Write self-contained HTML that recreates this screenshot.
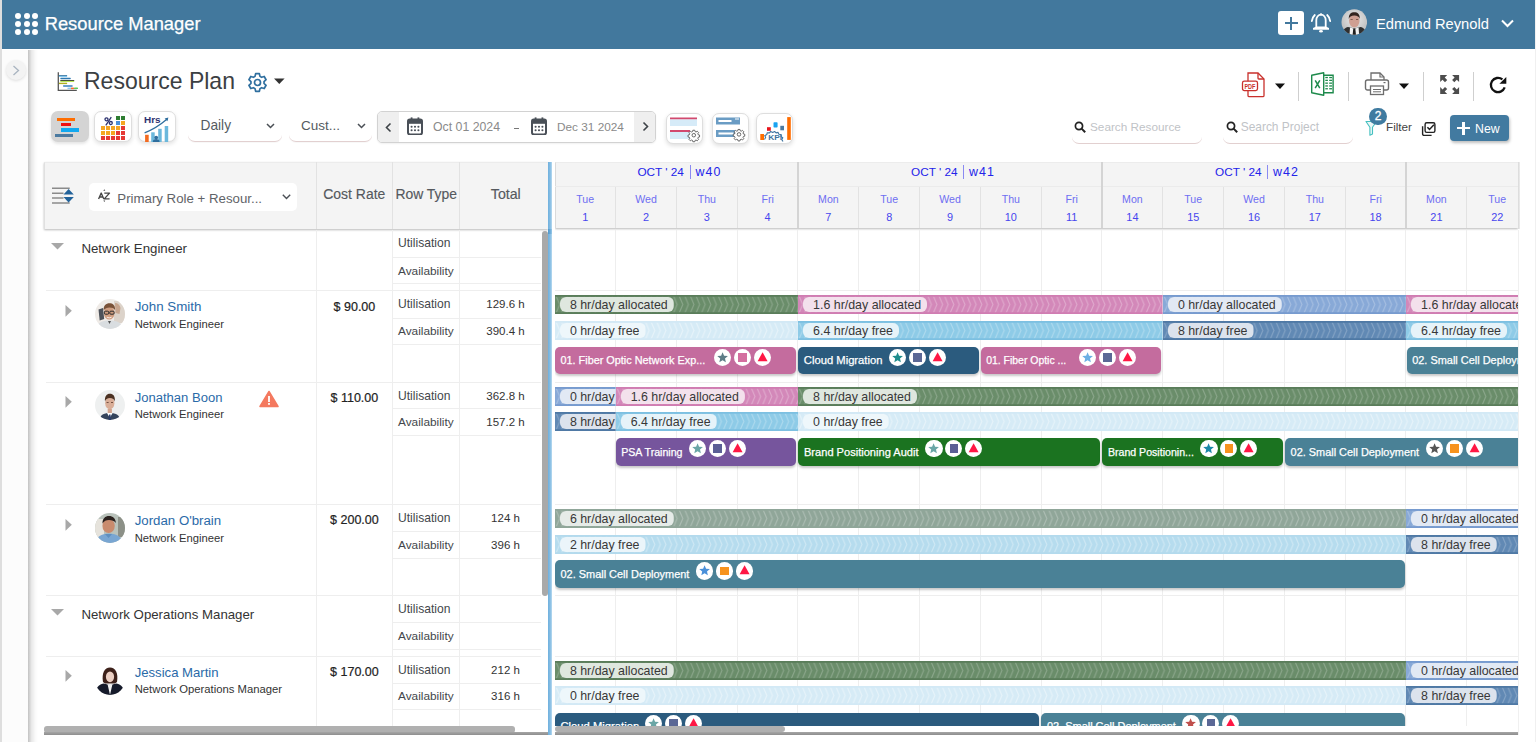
<!DOCTYPE html><html><head><meta charset="utf-8"><style>
html,body{margin:0;padding:0;}
body{width:1536px;height:742px;overflow:hidden;position:relative;background:#fff;font-family:"Liberation Sans",sans-serif;}
.a{position:absolute;}
.t{position:absolute;white-space:nowrap;}
</style></head><body>
<svg width="0" height="0" style="position:absolute"><defs>
<pattern id="chev" patternUnits="userSpaceOnUse" width="5.6" height="19"><path d="M0.8 0 L4.2 9.5 L0.8 19" fill="none" stroke="#fff" stroke-opacity="0.22" stroke-width="1.1"/></pattern>
<pattern id="chevL" patternUnits="userSpaceOnUse" width="5.6" height="19"><path d="M0.8 0 L4.2 9.5 L0.8 19" fill="none" stroke="#fff" stroke-opacity="0.35" stroke-width="1.1"/></pattern>
</defs></svg>
<svg width="0" height="0" style="position:absolute"><defs><pattern id="chvG" patternUnits="userSpaceOnUse" width="5.6" height="19"><path d="M0.6 0 L4.6 9.5 L0.6 19" fill="none" stroke="#fff" stroke-opacity="0.22" stroke-width="1.1"/></pattern><pattern id="chvP" patternUnits="userSpaceOnUse" width="5.6" height="19"><path d="M0.6 0 L4.6 9.5 L0.6 19" fill="none" stroke="#fff" stroke-opacity="0.28" stroke-width="1.1"/></pattern><pattern id="chvB" patternUnits="userSpaceOnUse" width="5.6" height="19"><path d="M0.6 0 L4.6 9.5 L0.6 19" fill="none" stroke="#fff" stroke-opacity="0.25" stroke-width="1.1"/></pattern><pattern id="chvS" patternUnits="userSpaceOnUse" width="5.6" height="19"><path d="M0.6 0 L4.6 9.5 L0.6 19" fill="none" stroke="#fff" stroke-opacity="0.25" stroke-width="1.1"/></pattern><pattern id="chvL" patternUnits="userSpaceOnUse" width="5.6" height="19"><path d="M0.6 0 L4.6 9.5 L0.6 19" fill="none" stroke="#fff" stroke-opacity="0.4" stroke-width="1.1"/></pattern><pattern id="chvM" patternUnits="userSpaceOnUse" width="5.6" height="19"><path d="M0.6 0 L4.6 9.5 L0.6 19" fill="none" stroke="#fff" stroke-opacity="0.28" stroke-width="1.1"/></pattern><pattern id="chvD" patternUnits="userSpaceOnUse" width="5.6" height="19"><path d="M0.6 0 L4.6 9.5 L0.6 19" fill="none" stroke="#fff" stroke-opacity="0.22" stroke-width="1.1"/></pattern><pattern id="chvML" patternUnits="userSpaceOnUse" width="5.6" height="19"><path d="M0.6 0 L4.6 9.5 L0.6 19" fill="none" stroke="#fff" stroke-opacity="0.35" stroke-width="1.1"/></pattern></defs></svg>
<div class="a" style="left:0.00px;top:0.00px;width:2.00px;height:742.00px;background:#dedede;"></div>
<div class="a" style="left:2.00px;top:0.00px;width:1533.00px;height:49.20px;background:#42789d;"></div>
<div class="a" style="left:1535.00px;top:0.00px;width:1.00px;height:742.00px;background:#f0f0f0;"></div>
<div class="a" style="left:15.10px;top:12.80px;width:6.00px;height:6.00px;background:#fff;border-radius:50%;"></div>
<div class="a" style="left:23.60px;top:12.80px;width:6.00px;height:6.00px;background:#fff;border-radius:50%;"></div>
<div class="a" style="left:32.00px;top:12.80px;width:6.00px;height:6.00px;background:#fff;border-radius:50%;"></div>
<div class="a" style="left:15.10px;top:21.00px;width:6.00px;height:6.00px;background:#fff;border-radius:50%;"></div>
<div class="a" style="left:23.60px;top:21.00px;width:6.00px;height:6.00px;background:#fff;border-radius:50%;"></div>
<div class="a" style="left:32.00px;top:21.00px;width:6.00px;height:6.00px;background:#fff;border-radius:50%;"></div>
<div class="a" style="left:15.10px;top:29.30px;width:6.00px;height:6.00px;background:#fff;border-radius:50%;"></div>
<div class="a" style="left:23.60px;top:29.30px;width:6.00px;height:6.00px;background:#fff;border-radius:50%;"></div>
<div class="a" style="left:32.00px;top:29.30px;width:6.00px;height:6.00px;background:#fff;border-radius:50%;"></div>
<div class="t" style="left:44.70px;top:14.91px;font-size:18.34px;line-height:18.34px;color:#fff;-webkit-text-stroke:0.25px #fff;">Resource Manager</div>
<div class="a" style="left:1278.00px;top:11.00px;width:26.00px;height:24.00px;background:#fff;border-radius:3px;"></div>
<div class="a" style="left:1284.50px;top:22.00px;width:13.00px;height:2.00px;background:#42789d;"></div>
<div class="a" style="left:1290.00px;top:16.50px;width:2.00px;height:13.00px;background:#42789d;"></div>
<svg class="a" style="left:1310.00px;top:12.00px;" width="22" height="22" viewBox="0 0 22 22"><path d="M6.3 15.6V8.2a4.7 5.6 0 0 1 9.4 0v7.4" fill="none" stroke="#fff" stroke-width="1.8"/><path d="M6.3 14.6L3 16v1.8h16V16l-3.3-1.4z" fill="#fff"/><ellipse cx="11" cy="19.3" rx="1.9" ry="1.2" fill="#fff"/><circle cx="11" cy="2.4" r="1.2" fill="#fff"/><path d="M1.8 9.2Q2.3 5.3 4.8 3M20.2 9.2Q19.7 5.3 17.2 3" fill="none" stroke="#fff" stroke-width="1.8" stroke-linecap="round"/></svg>
<svg class="a" style="left:1341.00px;top:9.00px;" width="26" height="26" viewBox="0 0 26 26"><defs><clipPath id="ca0"><circle cx="13.3" cy="13" r="12.8"/></clipPath><radialGradient id="hbg" cx="50%" cy="40%" r="60%"><stop offset="0" stop-color="#ececec"/><stop offset="1" stop-color="#b9b9b9"/></radialGradient></defs><g clip-path="url(#ca0)"><rect width="27" height="26" fill="url(#hbg)"/><ellipse cx="13.3" cy="11.8" rx="5.3" ry="6.6" fill="#cf9f92"/><path d="M7.8 10C7.6 5 10 3.3 13.3 3.3s5.7 1.7 5.5 6.7c-0.6-2.2-2.4-3.4-5.5-3.4S8.4 7.8 7.8 10z" fill="#33241f"/><rect x="9.5" y="10.2" width="2.2" height="0.8" fill="#6b4a40"/><rect x="15" y="10.2" width="2.2" height="0.8" fill="#6b4a40"/><path d="M0.5 27c0.5-5.5 3.5-8.5 6.5-9l6.3 1.5 6.3-1.5c3 0.5 6 3.5 6.5 9z" fill="#2f2f2f"/><path d="M9 18.4l4.3 1.3 4.3-1.3 0.6 8.6H8.4z" fill="#f2f2f2"/><path d="M12.3 19.5h2l0.8 7.5h-3.6z" fill="#1e1e1e"/></g></svg>
<div class="t" style="left:1376.00px;top:16.61px;font-size:14.73px;line-height:14.73px;color:#fff;">Edmund Reynold</div>
<svg class="a" style="left:1500.00px;top:18.00px;" width="15" height="11" viewBox="0 0 15 11"><path d="M2 2.5l5.5 5.5 5.5-5.5" fill="none" stroke="#fff" stroke-width="2"/></svg>
<div class="a" style="left:2.00px;top:49.50px;width:26.00px;height:692.50px;background:#fcfcfc;"></div>
<div class="a" style="left:28.00px;top:49.50px;width:10.00px;height:692.50px;background:linear-gradient(to right, rgba(0,0,0,0.24), rgba(0,0,0,0.09) 35%, rgba(0,0,0,0.02) 75%, rgba(0,0,0,0));"></div>
<div class="a" style="left:5.50px;top:60.00px;width:20.00px;height:20.00px;background:#f3f3f3;border-radius:50%;box-shadow:0 1px 3px rgba(0,0,0,0.12);"></div>
<svg class="a" style="left:11.00px;top:63.50px;" width="10" height="13" viewBox="0 0 10 13"><path d="M2.5 2l5 4.5-5 4.5" fill="none" stroke="#a9b4c0" stroke-width="1.3"/></svg>
<svg class="a" style="left:56.00px;top:71.00px;" width="24" height="22" viewBox="0 0 24 22"><path d="M2.3 1.3V19.4H20.8" fill="none" stroke="#555" stroke-width="1.3"/><rect x="2.9" y="4" width="8.2" height="0.8" fill="#2a5f8a"/><rect x="2.9" y="4.8" width="8.2" height="0.9" fill="#4ab0e8"/><rect x="4.3" y="6.8" width="10.5" height="1.4" rx="0.6" fill="#2f78b0"/><rect x="4.3" y="9" width="13.9" height="0.9" fill="#2a2a2a"/><rect x="4.3" y="9.9" width="13.9" height="0.9" fill="#a8e030"/><rect x="2.9" y="11.7" width="8.2" height="1.4" fill="#b0b020"/><rect x="7" y="14.2" width="9.7" height="1.5" rx="0.6" fill="#3a80c0"/><rect x="11.5" y="16.6" width="3.5" height="1.5" fill="#8cc8f0"/><rect x="15" y="16.6" width="3" height="1.5" fill="#ff6d2a"/><rect x="18" y="16.6" width="4" height="1.5" rx="0.6" fill="#5cc860"/></svg>
<div class="t" style="left:84.00px;top:70.32px;font-size:23.02px;line-height:23.02px;color:#3c4043;">Resource Plan</div>
<svg class="a" style="left:247.00px;top:72.20px;" width="21" height="21" viewBox="0 0 21 21"><path d="M8.03 4.38 L8.63 1.70 L12.37 1.70 L12.97 4.38 L14.56 5.30 L17.19 4.48 L19.06 7.72 L17.04 9.58 L17.04 11.42 L19.06 13.28 L17.19 16.52 L14.56 15.70 L12.97 16.62 L12.37 19.30 L8.63 19.30 L8.03 16.62 L6.44 15.70 L3.81 16.52 L1.94 13.28 L3.96 11.42 L3.96 9.58 L1.94 7.72 L3.81 4.48 L6.44 5.30Z" fill="none" stroke="#2f6f9f" stroke-width="1.7" stroke-linejoin="round"/><circle cx="10.5" cy="10.5" r="3" fill="none" stroke="#2f6f9f" stroke-width="1.7"/></svg>
<svg class="a" style="left:273.20px;top:76.80px;" width="12" height="8" viewBox="0 0 12 8"><path d="M1 1.5h10.6l-5.3 5.6z" fill="#333"/></svg>
<div class="a" style="left:51.00px;top:111.00px;width:38.00px;height:31.00px;background:#d4d4d4;border-radius:7px;box-shadow:0 2px 3px rgba(0,0,0,0.10);"></div>
<div class="a" style="left:57.00px;top:117.50px;width:18.00px;height:3.30px;background:#ff6d00;"></div>
<div class="a" style="left:60.50px;top:123.00px;width:10.50px;height:3.20px;background:#f01010;"></div>
<div class="a" style="left:60.50px;top:128.30px;width:18.50px;height:3.30px;background:#10a8f0;"></div>
<div class="a" style="left:55.00px;top:133.70px;width:17.50px;height:3.10px;background:#4b7aa0;"></div>
<div class="a" style="left:94.40px;top:111.00px;width:37.90px;height:31.00px;background:#fff;border:1px solid #dedede;box-sizing:border-box;border-radius:7px;box-shadow:0 2px 4px rgba(0,0,0,0.12);"></div>
<div class="a" style="left:138.30px;top:111.00px;width:37.90px;height:31.00px;background:#fff;border:1px solid #dedede;box-sizing:border-box;border-radius:7px;box-shadow:0 2px 4px rgba(0,0,0,0.12);"></div>
<svg class="a" style="left:100.50px;top:116.00px;" width="25" height="25" viewBox="0 0 25 25"><rect x="0" y="10" width="4" height="4" fill="#f5a623"/><rect x="5" y="10" width="4" height="4" fill="#f5a623"/><rect x="10" y="10" width="4" height="4" fill="#f5a623"/><rect x="15" y="10" width="4" height="4" fill="#f5a623"/><rect x="20" y="10" width="4" height="4" fill="#e53935"/><rect x="0" y="15" width="4" height="4" fill="#f5a623"/><rect x="5" y="15" width="4" height="4" fill="#f5a623"/><rect x="10" y="15" width="4" height="4" fill="#f5a623"/><rect x="15" y="15" width="4" height="4" fill="#e53935"/><rect x="20" y="15" width="4" height="4" fill="#e53935"/><rect x="0" y="20" width="4" height="4" fill="#e53935"/><rect x="5" y="20" width="4" height="4" fill="#e53935"/><rect x="10" y="20" width="4" height="4" fill="#e53935"/><rect x="15" y="20" width="4" height="4" fill="#e53935"/><rect x="20" y="20" width="4" height="4" fill="#e53935"/><rect x="15" y="0" width="4" height="4" fill="#2e7d32"/><rect x="20" y="0" width="4" height="4" fill="#2e7d32"/><rect x="15" y="5" width="4" height="4" fill="#4a90d9"/><rect x="20" y="5" width="4" height="4" fill="#f5a623"/><g fill="none" stroke="#2d3370" stroke-width="1.3"><circle cx="5.5" cy="3.3" r="1.5"/><circle cx="9.8" cy="7" r="1.5"/><path d="M10.3 1.2L4.8 9.4"/></g></svg>
<svg class="a" style="left:138.30px;top:111.00px;border-radius:7px;" width="37" height="31" viewBox="0 0 37 31"><text x="6" y="12.4" font-family="Liberation Sans" font-size="9.6" font-weight="bold" fill="#2d3370" textLength="16.6" lengthAdjust="spacingAndGlyphs">Hrs</text><path d="M6.6 21.8C13 19.5 21 15 29.5 7.8" fill="none" stroke="#2f6e9e" stroke-width="1.3"/><path d="M26.6 7.4l3.8-0.9-1 3.7z" fill="#2f6e9e"/><rect x="7.1" y="23.8" width="3.6" height="7.2" fill="#f26b21"/><rect x="13.2" y="21.3" width="3.5" height="9.7" fill="#6bb8dc"/><rect x="20.2" y="17.8" width="3.5" height="13.2" fill="#6bb8dc"/><rect x="26.7" y="15" width="3.5" height="16" fill="#6bb8dc"/><circle cx="18.2" cy="26.6" r="1.9" fill="#2f6e9e"/><path d="M14.8 31c0-2.2 1.5-2.9 3.4-2.9s3.4 0.7 3.4 2.9z" fill="#2f6e9e"/></svg>
<div class="a" style="left:188.00px;top:110.00px;width:94.00px;height:31.50px;border-bottom:1px solid #e2d0d0;border-radius:0 0 7px 7px;box-shadow:0 1px 1px rgba(0,0,0,0.03);box-sizing:border-box;"></div>
<div class="t" style="left:200.50px;top:119.41px;font-size:13.72px;line-height:13.72px;color:#555b61;">Daily</div>
<svg class="a" style="left:265.00px;top:122.00px;" width="11" height="8" viewBox="0 0 11 8"><path d="M2 2l3.5 3.5L9 2" fill="none" stroke="#4a4f55" stroke-width="1.5"/></svg>
<div class="a" style="left:289.00px;top:110.00px;width:83.00px;height:31.50px;border-bottom:1px solid #e2d0d0;border-radius:0 0 7px 7px;box-shadow:0 1px 1px rgba(0,0,0,0.03);box-sizing:border-box;"></div>
<div class="t" style="left:301.00px;top:119.40px;font-size:13.50px;line-height:13.50px;color:#555b61;">Cust...</div>
<svg class="a" style="left:356.00px;top:122.00px;" width="11" height="8" viewBox="0 0 11 8"><path d="M2 2l3.5 3.5L9 2" fill="none" stroke="#4a4f55" stroke-width="1.5"/></svg>
<div class="a" style="left:377.30px;top:111.30px;width:278.70px;height:31.30px;border:1px solid #d2d2d2;border-radius:5px;box-sizing:border-box;background:#fff;overflow:hidden;box-shadow:0 1px 2px rgba(0,0,0,0.06);"></div>
<div class="a" style="left:378.30px;top:112.30px;width:21.00px;height:29.30px;background:#efefef;border-radius:4px 0 0 4px;"></div>
<div class="a" style="left:634.00px;top:112.30px;width:21.00px;height:29.30px;background:#efefef;border-radius:0 4px 4px 0;"></div>
<svg class="a" style="left:384.00px;top:122.00px;" width="9" height="11" viewBox="0 0 9 11"><path d="M6.5 1.5L2.5 5.5l4 4" fill="none" stroke="#3d4247" stroke-width="1.6"/></svg>
<svg class="a" style="left:640.50px;top:121.00px;" width="9" height="11" viewBox="0 0 9 11"><path d="M2.5 1.5l4 4-4 4" fill="none" stroke="#3d4247" stroke-width="1.6"/></svg>
<svg class="a" style="left:407.00px;top:117.00px;" width="16" height="18" viewBox="0 0 16 18"><rect x="1" y="2.6" width="14" height="14.8" rx="1.8" fill="none" stroke="#4a5058" stroke-width="2"/><rect x="1" y="2.6" width="14" height="4.2" fill="#4a5058"/><rect x="3.7" y="0.4" width="1.8" height="3" fill="#4a5058"/><rect x="10.5" y="0.4" width="1.8" height="3" fill="#4a5058"/><circle cx="4.6" cy="9.8" r="1.05" fill="#4a5058"/><circle cx="8.0" cy="9.8" r="1.05" fill="#4a5058"/><circle cx="11.399999999999999" cy="9.8" r="1.05" fill="#4a5058"/><circle cx="4.6" cy="13.200000000000001" r="1.05" fill="#4a5058"/><circle cx="8.0" cy="13.200000000000001" r="1.05" fill="#4a5058"/><circle cx="11.399999999999999" cy="13.200000000000001" r="1.05" fill="#4a5058"/></svg>
<div class="t" style="left:433.00px;top:121.21px;font-size:12.30px;line-height:12.30px;color:#8a8a8a;">Oct 01 2024</div>
<div class="a" style="left:514.00px;top:127.50px;width:5.00px;height:1.30px;background:#777;"></div>
<svg class="a" style="left:531.00px;top:117.00px;" width="16" height="18" viewBox="0 0 16 18"><rect x="1" y="2.6" width="14" height="14.8" rx="1.8" fill="none" stroke="#4a5058" stroke-width="2"/><rect x="1" y="2.6" width="14" height="4.2" fill="#4a5058"/><rect x="3.7" y="0.4" width="1.8" height="3" fill="#4a5058"/><rect x="10.5" y="0.4" width="1.8" height="3" fill="#4a5058"/><circle cx="4.6" cy="9.8" r="1.05" fill="#4a5058"/><circle cx="8.0" cy="9.8" r="1.05" fill="#4a5058"/><circle cx="11.399999999999999" cy="9.8" r="1.05" fill="#4a5058"/><circle cx="4.6" cy="13.200000000000001" r="1.05" fill="#4a5058"/><circle cx="8.0" cy="13.200000000000001" r="1.05" fill="#4a5058"/><circle cx="11.399999999999999" cy="13.200000000000001" r="1.05" fill="#4a5058"/></svg>
<div class="t" style="left:557.00px;top:122.21px;font-size:11.81px;line-height:11.81px;color:#8a8a8a;">Dec 31 2024</div>
<div class="a" style="left:666.00px;top:112.70px;width:37.00px;height:31.50px;background:#fff;border:1px solid #dedede;box-sizing:border-box;border-radius:7px;box-shadow:0 2px 4px rgba(0,0,0,0.13);"></div>
<div class="a" style="left:712.00px;top:112.70px;width:36.50px;height:31.50px;background:#fff;border:1px solid #dedede;box-sizing:border-box;border-radius:7px;box-shadow:0 2px 4px rgba(0,0,0,0.13);"></div>
<div class="a" style="left:756.00px;top:112.70px;width:37.00px;height:31.50px;background:#fff;border:1px solid #dedede;box-sizing:border-box;border-radius:7px;box-shadow:0 2px 4px rgba(0,0,0,0.13);"></div>
<svg class="a" style="left:670.00px;top:116.00px;" width="32" height="30" viewBox="0 0 32 30"><rect x="0" y="1.5" width="27" height="2" fill="#d2496e"/><rect x="0" y="3.5" width="27" height="6.5" fill="#d6ebf8"/><rect x="0" y="14" width="20" height="2" fill="#d2496e"/><rect x="0" y="16" width="20" height="7" fill="#d6ebf8"/><g transform="translate(23.8 19.2) scale(0.8)"><path d="M-1.2 -6.2h2.4l0.4 1.7 1.2 0.5 1.5-1 1.7 1.7-1 1.5 0.5 1.2 1.7 0.4v2.4l-1.7 0.4-0.5 1.2 1 1.5-1.7 1.7-1.5-1-1.2 0.5-0.4 1.7h-2.4l-0.4-1.7-1.2-0.5-1.5 1-1.7-1.7 1-1.5-0.5-1.2-1.7-0.4v-2.4l1.7-0.4 0.5-1.2-1-1.5 1.7-1.7 1.5 1 1.2-0.5z" fill="#fff" stroke="#555" stroke-width="1.1" stroke-linejoin="round"/><circle r="2.2" fill="none" stroke="#555" stroke-width="1.1"/></g></svg>
<svg class="a" style="left:716.00px;top:116.00px;" width="32" height="30" viewBox="0 0 32 30"><rect x="0" y="1.5" width="24" height="7" fill="#6a9cc4"/><rect x="2.5" y="4" width="13" height="2" fill="#fff"/><rect x="19" y="2.5" width="4" height="1" fill="#fff"/><rect x="0" y="14" width="19" height="7" fill="#6a9cc4"/><rect x="2.5" y="16.5" width="15" height="2" fill="#fff"/><g transform="translate(23 18.4) scale(0.8)"><path d="M-1.2 -6.2h2.4l0.4 1.7 1.2 0.5 1.5-1 1.7 1.7-1 1.5 0.5 1.2 1.7 0.4v2.4l-1.7 0.4-0.5 1.2 1 1.5-1.7 1.7-1.5-1-1.2 0.5-0.4 1.7h-2.4l-0.4-1.7-1.2-0.5-1.5 1-1.7-1.7 1-1.5-0.5-1.2-1.7-0.4v-2.4l1.7-0.4 0.5-1.2-1-1.5 1.7-1.7 1.5 1 1.2-0.5z" fill="#fff" stroke="#555" stroke-width="1.1" stroke-linejoin="round"/><circle r="2.2" fill="none" stroke="#555" stroke-width="1.1"/></g></svg>
<svg class="a" style="left:756.00px;top:112.70px;" width="37" height="31" viewBox="0 0 37 31"><rect x="4.3" y="21" width="3.7" height="6" fill="#ff6d00"/><rect x="11" y="14.2" width="3.8" height="3.6" fill="#e8141c"/><rect x="17.5" y="9.2" width="4.1" height="5.4" rx="0.8" fill="#1aa3f0"/><rect x="24.3" y="12.8" width="3.7" height="4.5" fill="#4b7aa0"/><rect x="31.2" y="4.1" width="3.6" height="22.8" fill="#ff6d00"/><path d="M8.5 26.5l1.2-2.2-1-1.6 2.2-1.2 0.2-1.8 2.4 0.2 1.2-1.5 2 1 1.9-0.9 1.5 1.4 2-0.5 0.8 1.8 2.3 0.4-0.2 2 1.8 1.2-1 1.8 1.2 1.9" fill="none" stroke="#3f75a0" stroke-width="1.1" stroke-linejoin="round"/><text x="12.2" y="26.8" font-family="Liberation Sans" font-size="7.2" font-weight="bold" fill="#3f75a0" textLength="14" lengthAdjust="spacingAndGlyphs">KPI</text></svg>
<svg class="a" style="left:1240.50px;top:71.00px;" width="27" height="27" viewBox="0 0 27 27"><path d="M7 2h10l6 6v16.5a1.2 1.2 0 0 1-1.2 1.2H8.2A1.2 1.2 0 0 1 7 24.5z" fill="#fff" stroke="#c9302c" stroke-width="1.3"/><path d="M17 2v5.2a0.8 0.8 0 0 0 0.8 0.8H23" fill="none" stroke="#c9302c" stroke-width="1.3"/><rect x="1.5" y="10.2" width="15" height="9.4" rx="1.8" fill="#fff" stroke="#c9302c" stroke-width="1.3"/><text x="3.4" y="17.5" font-family="Liberation Sans" font-size="6.3" font-weight="bold" fill="#c9302c" textLength="11" lengthAdjust="spacingAndGlyphs">PDF</text></svg>
<svg class="a" style="left:1274.00px;top:82.00px;" width="12" height="8" viewBox="0 0 12 8"><path d="M1 1.5h10l-5 5.5z" fill="#111"/></svg>
<div class="a" style="left:1297.50px;top:72.00px;width:1.00px;height:29.40px;background:#cfcfcf;"></div>
<div class="a" style="left:1347.50px;top:72.00px;width:1.00px;height:29.40px;background:#cfcfcf;"></div>
<div class="a" style="left:1422.50px;top:72.00px;width:1.00px;height:29.40px;background:#cfcfcf;"></div>
<div class="a" style="left:1472.50px;top:72.00px;width:1.00px;height:29.40px;background:#cfcfcf;"></div>
<svg class="a" style="left:1310.00px;top:71.00px;" width="26" height="25" viewBox="0 0 26 25"><path d="M1.7 4.2l12-2.4v22.4l-12-2.5z" fill="#fff" stroke="#1e8a4c" stroke-width="1.4" stroke-linejoin="round"/><path d="M13.7 4.2h9.4v17.6h-9.4" fill="none" stroke="#1e8a4c" stroke-width="1.4"/><rect x="15.3" y="5.9" width="2.6" height="1.3" fill="#1e8a4c"/><rect x="19.2" y="5.9" width="2.8" height="1.3" fill="#1e8a4c"/><rect x="15.3" y="8.7" width="2.6" height="1.3" fill="#1e8a4c"/><rect x="19.2" y="8.7" width="2.8" height="1.3" fill="#1e8a4c"/><rect x="15.3" y="11.5" width="2.6" height="1.3" fill="#1e8a4c"/><rect x="19.2" y="11.5" width="2.8" height="1.3" fill="#1e8a4c"/><rect x="15.3" y="14.3" width="2.6" height="1.3" fill="#1e8a4c"/><rect x="19.2" y="14.3" width="2.8" height="1.3" fill="#1e8a4c"/><rect x="15.3" y="17.1" width="2.6" height="1.3" fill="#1e8a4c"/><rect x="19.2" y="17.1" width="2.8" height="1.3" fill="#1e8a4c"/><path d="M5.2 9.3l4.6 7.9M9.8 9.3l-4.6 7.9" stroke="#1e8a4c" stroke-width="1.5"/></svg>
<svg class="a" style="left:1364.00px;top:71.00px;" width="27" height="26" viewBox="0 0 27 26"><path d="M7 9V2h9l4 4v3" fill="none" stroke="#6d6d6d" stroke-width="1.3"/><path d="M16 2v4h4" fill="none" stroke="#6d6d6d" stroke-width="1.2"/><rect x="1.5" y="9" width="23" height="10" rx="2" fill="none" stroke="#6d6d6d" stroke-width="1.4"/><rect x="6.5" y="15" width="13" height="8.5" fill="#fff" stroke="#6d6d6d" stroke-width="1.3"/><path d="M9 18.5h8M9 20.8h8" stroke="#6d6d6d" stroke-width="1"/><rect x="19.5" y="11" width="2" height="1.2" fill="#6d6d6d"/></svg>
<svg class="a" style="left:1398.00px;top:82.00px;" width="12" height="8" viewBox="0 0 12 8"><path d="M1 1.5h10l-5 5.5z" fill="#111"/></svg>
<svg class="a" style="left:1439.00px;top:74.00px;" width="22" height="22" viewBox="0 0 22 22"><g fill="#4d4d4d"><path d="M1.2 1.1h7L5.7 3.6l2.5 2.5-2.2 2.2-2.5-2.5-2.3 2.3z"/><path d="M20.1 1.1h-7l2.5 2.5-2.5 2.5 2.2 2.2 2.5-2.5 2.3 2.3z"/><path d="M1.2 20.1h7l-2.5-2.5 2.5-2.5-2.2-2.2-2.5 2.5-2.3-2.3z"/><path d="M20.1 20.1h-7l2.5-2.5-2.5-2.5 2.2-2.2 2.5 2.5 2.3-2.3z"/></g></svg>
<svg class="a" style="left:1488.00px;top:74.00px;" width="21" height="21" viewBox="0 0 21 21"><path d="M14.4 5.4A7.1 7.1 0 1 0 16.7 13.4" fill="none" stroke="#111" stroke-width="2.3"/><path d="M11.4 9.7h6.9V3z" fill="#111"/></svg>
<div class="a" style="left:1072.00px;top:112.00px;width:129.60px;height:32.00px;border-bottom:1px solid #e2d0d0;border-radius:0 0 7px 7px;box-sizing:border-box;"></div>
<svg class="a" style="left:1074.00px;top:121.00px;" width="13" height="13" viewBox="0 0 13 13"><circle cx="5" cy="5" r="3.6" fill="none" stroke="#222" stroke-width="1.7"/><path d="M7.6 7.6l3.6 3.6" stroke="#222" stroke-width="2"/></svg>
<div class="t" style="left:1090.00px;top:121.41px;font-size:11.78px;line-height:11.78px;color:#bfc3c7;">Search Resource</div>
<div class="a" style="left:1223.00px;top:112.00px;width:129.60px;height:32.00px;border-bottom:1px solid #e2d0d0;border-radius:0 0 7px 7px;box-sizing:border-box;"></div>
<svg class="a" style="left:1225.60px;top:121.00px;" width="13" height="13" viewBox="0 0 13 13"><circle cx="5" cy="5" r="3.6" fill="none" stroke="#222" stroke-width="1.7"/><path d="M7.6 7.6l3.6 3.6" stroke="#222" stroke-width="2"/></svg>
<div class="t" style="left:1240.70px;top:122.41px;font-size:11.94px;line-height:11.94px;color:#bfc3c7;">Search Project</div>
<svg class="a" style="left:1365.00px;top:120.00px;" width="14" height="16" viewBox="0 0 14 16"><path d="M1 1.5h10.5l-4 5.7v6.8l-2.6 1.2V7.2z" fill="#eaf7f7" stroke="#45c0c0" stroke-width="1.1" stroke-linejoin="round"/></svg>
<div class="a" style="left:1369.20px;top:107.60px;width:17.60px;height:17.60px;background:#3f7ba0;border-radius:50%;"></div>
<div class="t" style="left:1374.66px;top:110.21px;font-size:12.00px;line-height:12.00px;color:#fff;-webkit-text-stroke:0.3px #fff;">2</div>
<div class="t" style="left:1386.00px;top:121.01px;font-size:11.70px;line-height:11.70px;color:#444;">Filter</div>
<svg class="a" style="left:1421.00px;top:121.00px;" width="16" height="16" viewBox="0 0 16 16"><path d="M1.6 5.2v7.8a1.4 1.4 0 0 0 1.4 1.4h7.6" fill="none" stroke="#222" stroke-width="1.4"/><rect x="4.1" y="1.8" width="9.8" height="9.6" rx="1.6" fill="#fff" stroke="#222" stroke-width="1.4"/><path d="M6.4 6.3l2.1 2.1 4.4-4.6" fill="none" stroke="#222" stroke-width="1.5"/></svg>
<div class="a" style="left:1450.00px;top:115.20px;width:59.00px;height:25.80px;background:#427aa0;border-radius:4px;box-shadow:1px 2px 3px rgba(0,0,0,0.25);"></div>
<div class="a" style="left:1457.00px;top:127.00px;width:13.00px;height:2.20px;background:#fff;"></div>
<div class="a" style="left:1462.40px;top:121.60px;width:2.20px;height:13.00px;background:#fff;"></div>
<div class="t" style="left:1475.00px;top:122.81px;font-size:12.30px;line-height:12.30px;color:#fff;">New</div>
<div class="a" style="left:43.50px;top:161.50px;width:504.00px;height:67.50px;background:#f4f4f4;border-left:1px solid #e0e0e0;border-top:1px solid #ececec;box-sizing:border-box;box-shadow:0 1px 2px rgba(0,0,0,0.28);"></div>
<div class="a" style="left:316.30px;top:161.50px;width:1.00px;height:67.50px;background:#e2e2e2;"></div>
<div class="a" style="left:392.00px;top:161.50px;width:1.00px;height:67.50px;background:#e2e2e2;"></div>
<div class="a" style="left:459.00px;top:161.50px;width:1.00px;height:67.50px;background:#e2e2e2;"></div>
<svg class="a" style="left:46.00px;top:180.00px;" width="30" height="26" viewBox="0 0 30 26"><g stroke="#8a8a8a" stroke-width="1.5"><path d="M6 8.2h17.7M6 13.2h11.5M6 18.1h11.5M6 23.1h17.7"/></g><path d="M17.5 14.6L22.6 8.9l5.2 5.7z" fill="#22629a"/><path d="M17.5 17.1h10.3l-5.2 5.4z" fill="#22629a"/></svg>
<div class="a" style="left:89.00px;top:183.30px;width:208.00px;height:27.80px;background:#fff;border-radius:5px;"></div>
<svg class="a" style="left:96.00px;top:186.00px;" width="16" height="18" viewBox="0 0 16 18"><g fill="none" stroke="#454545" stroke-width="1.35" stroke-linejoin="round"><path d="M2.6 13L5.2 7l2.6 6M3.6 11h3.2"/><path d="M8.3 7.1h5.2L8.3 12.9h5.3"/></g><path d="M8.3 3.2l-1 1.5h2z M7.3 14.6h2l-1 1.5z" fill="#454545"/></svg>
<div class="t" style="left:117.30px;top:191.81px;font-size:13.25px;line-height:13.25px;color:#5f6368;">Primary Role + Resour...</div>
<svg class="a" style="left:281.00px;top:193.00px;" width="11" height="8" viewBox="0 0 11 8"><path d="M1.8 1.8l3.7 3.7 3.7-3.7" fill="none" stroke="#4a4f55" stroke-width="1.4"/></svg>
<div class="t" style="left:323.30px;top:188.22px;font-size:13.94px;line-height:13.94px;color:#55595e;-webkit-text-stroke:0.15px #55595e;">Cost Rate</div>
<div class="t" style="left:395.40px;top:188.21px;font-size:13.91px;line-height:13.91px;color:#55595e;-webkit-text-stroke:0.15px #55595e;">Row Type</div>
<div class="t" style="left:490.80px;top:187.22px;font-size:14.20px;line-height:14.20px;color:#55595e;-webkit-text-stroke:0.15px #55595e;">Total</div>
<div class="a" style="left:392.50px;top:257.00px;width:148.50px;height:1.00px;background:#eeeeee;"></div>
<div class="a" style="left:392.50px;top:282.50px;width:148.50px;height:1.00px;background:#eeeeee;"></div>
<div class="a" style="left:316.30px;top:229.50px;width:1.00px;height:61.30px;background:#eeeeee;"></div>
<div class="a" style="left:392.00px;top:229.50px;width:1.00px;height:61.30px;background:#eeeeee;"></div>
<div class="a" style="left:459.00px;top:229.50px;width:1.00px;height:61.30px;background:#eeeeee;"></div>
<div class="t" style="left:398.00px;top:237.31px;font-size:12.09px;line-height:12.09px;color:#43474b;">Utilisation</div>
<div class="t" style="left:398.00px;top:265.60px;font-size:11.84px;line-height:11.84px;color:#43474b;">Availability</div>
<svg class="a" style="left:50.00px;top:242.00px;" width="15" height="8" viewBox="0 0 15 8"><path d="M1 1h13l-6.5 6.5z" fill="#a8a8a8"/></svg>
<div class="t" style="left:81.40px;top:241.81px;font-size:13.29px;line-height:13.29px;color:#333;">Network Engineer</div>
<div class="a" style="left:45.70px;top:290.30px;width:495.30px;height:1.00px;background:#eeeeee;"></div>
<div class="a" style="left:392.50px;top:317.80px;width:148.50px;height:1.00px;background:#eeeeee;"></div>
<div class="a" style="left:392.50px;top:344.10px;width:148.50px;height:1.00px;background:#eeeeee;"></div>
<div class="a" style="left:316.30px;top:290.80px;width:1.00px;height:91.80px;background:#eeeeee;"></div>
<div class="a" style="left:392.00px;top:290.80px;width:1.00px;height:91.80px;background:#eeeeee;"></div>
<div class="a" style="left:459.00px;top:290.80px;width:1.00px;height:91.80px;background:#eeeeee;"></div>
<div class="t" style="left:398.00px;top:298.22px;font-size:12.09px;line-height:12.09px;color:#43474b;">Utilisation</div>
<div class="t" style="left:398.00px;top:326.41px;font-size:11.84px;line-height:11.84px;color:#43474b;">Availability</div>
<svg class="a" style="left:64.00px;top:304.30px;" width="9" height="14" viewBox="0 0 9 14"><path d="M1.5 1v11.7l6.3-5.85z" fill="#a8a8a8"/></svg>
<svg class="a" style="left:94.50px;top:299.10px;" width="30" height="30" viewBox="0 0 30 30"><defs><clipPath id="cav0"><circle cx="15" cy="15" r="15"/></clipPath></defs><g clip-path="url(#cav0)"><rect width="30" height="30" fill="#efebe7"/><rect x="19" y="2" width="11" height="22" fill="#dcd3ca"/><path d="M20 4c3 0 5 2 5.5 5l-1 6-4-1z" fill="#c7a58e"/><path d="M3.5 10.5l4.5-1.5 1.2 11-4.5 1.5z" fill="#4d525a"/><ellipse cx="14.2" cy="14" rx="5.3" ry="6.6" fill="#cf9d80"/><path d="M8.6 11.5C8.3 6.5 11 4.3 14.5 4.3c3.2 0 5.8 1.8 5.6 6.6-1.2-1.7-3.2-2.5-5.6-2.5-2.6 0-4.5 1-5.9 3.1z" fill="#7a5238"/><rect x="9.4" y="12.2" width="4.3" height="3" rx="1" fill="none" stroke="#2a2a2a" stroke-width="1"/><rect x="14.8" y="12.2" width="4.3" height="3" rx="1" fill="none" stroke="#2a2a2a" stroke-width="1"/><path d="M11.8 18.2q2.4 1.4 4.8 0" fill="none" stroke="#fff" stroke-width="0.8"/><path d="M1 30c1-6 5.5-8.5 13.5-8.5s12.5 2.5 13.5 8.5z" fill="#d9dde0"/><path d="M13 22l1.5 3 1.5-3z" fill="#555"/></g></svg>
<div class="t" style="left:134.70px;top:300.20px;font-size:13.35px;line-height:13.35px;color:#2a6aa8;">John Smith</div>
<div class="t" style="left:134.70px;top:318.60px;font-size:11.25px;line-height:11.25px;color:#333;">Network Engineer</div>
<div class="t" style="left:333.55px;top:300.81px;font-size:12.50px;line-height:12.50px;color:#222;-webkit-text-stroke:0.2px #222;">$ 90.00</div>
<div class="t" style="left:486.32px;top:299.22px;font-size:11.50px;line-height:11.50px;color:#333;">129.6 h</div>
<div class="t" style="left:486.32px;top:326.41px;font-size:11.50px;line-height:11.50px;color:#333;">390.4 h</div>
<div class="a" style="left:45.70px;top:382.10px;width:495.30px;height:1.00px;background:#eeeeee;"></div>
<div class="a" style="left:392.50px;top:407.80px;width:148.50px;height:1.00px;background:#eeeeee;"></div>
<div class="a" style="left:392.50px;top:435.00px;width:148.50px;height:1.00px;background:#eeeeee;"></div>
<div class="a" style="left:316.30px;top:382.60px;width:1.00px;height:121.90px;background:#eeeeee;"></div>
<div class="a" style="left:392.00px;top:382.60px;width:1.00px;height:121.90px;background:#eeeeee;"></div>
<div class="a" style="left:459.00px;top:382.60px;width:1.00px;height:121.90px;background:#eeeeee;"></div>
<div class="t" style="left:398.00px;top:389.51px;font-size:12.09px;line-height:12.09px;color:#43474b;">Utilisation</div>
<div class="t" style="left:398.00px;top:416.81px;font-size:11.84px;line-height:11.84px;color:#43474b;">Availability</div>
<svg class="a" style="left:64.00px;top:394.80px;" width="9" height="14" viewBox="0 0 9 14"><path d="M1.5 1v11.7l6.3-5.85z" fill="#a8a8a8"/></svg>
<svg class="a" style="left:94.50px;top:390.30px;" width="30" height="30" viewBox="0 0 30 30"><defs><clipPath id="cav1"><circle cx="15" cy="15" r="15"/></clipPath></defs><g clip-path="url(#cav1)"><rect width="30" height="30" fill="#eef0f0"/><ellipse cx="14.8" cy="13.2" rx="4.6" ry="6.2" fill="#d9ae98"/><path d="M10 11.5c-0.6-5.2 1.8-7.8 4.9-7.8s5.6 2.4 4.9 7.8c-0.6-2.4-2.2-3.6-4.9-3.6s-4.3 1.2-4.9 3.6z" fill="#4b3122"/><rect x="11.6" y="12.2" width="2" height="0.8" fill="#5a3a2c"/><rect x="16" y="12.2" width="2" height="0.8" fill="#5a3a2c"/><path d="M4.5 30c0.5-4.5 3.5-7 10.3-7s9.8 2.5 10.3 7z" fill="#34445c"/><path d="M11.8 22.8l3 5 3-5z" fill="#fff"/><path d="M14.1 24.5h1.4l0.5 5.5h-2.4z" fill="#2c3e6a"/><path d="M12.7 19h4.2v4h-4.2z" fill="#d2a48e"/></g></svg>
<div class="t" style="left:134.70px;top:391.31px;font-size:13.06px;line-height:13.06px;color:#2a6aa8;">Jonathan Boon</div>
<div class="t" style="left:134.70px;top:409.41px;font-size:11.25px;line-height:11.25px;color:#333;">Network Engineer</div>
<div class="t" style="left:330.53px;top:391.90px;font-size:12.50px;line-height:12.50px;color:#222;-webkit-text-stroke:0.2px #222;">$ 110.00</div>
<div class="t" style="left:486.32px;top:390.51px;font-size:11.50px;line-height:11.50px;color:#333;">362.8 h</div>
<div class="t" style="left:486.32px;top:416.81px;font-size:11.50px;line-height:11.50px;color:#333;">157.2 h</div>
<svg class="a" style="left:259.00px;top:390.00px;" width="20" height="18" viewBox="0 0 20 18"><path d="M10 1.5L19 16.5H1z" fill="#f4795f" stroke="#f4795f" stroke-width="1.5" stroke-linejoin="round"/><rect x="9.1" y="6" width="1.8" height="6" fill="#fff"/><rect x="9.1" y="13" width="1.8" height="1.8" fill="#fff"/></svg>
<div class="a" style="left:45.70px;top:504.00px;width:495.30px;height:1.00px;background:#eeeeee;"></div>
<div class="a" style="left:392.50px;top:530.60px;width:148.50px;height:1.00px;background:#eeeeee;"></div>
<div class="a" style="left:392.50px;top:557.80px;width:148.50px;height:1.00px;background:#eeeeee;"></div>
<div class="a" style="left:316.30px;top:504.50px;width:1.00px;height:91.30px;background:#eeeeee;"></div>
<div class="a" style="left:392.00px;top:504.50px;width:1.00px;height:91.30px;background:#eeeeee;"></div>
<div class="a" style="left:459.00px;top:504.50px;width:1.00px;height:91.30px;background:#eeeeee;"></div>
<div class="t" style="left:398.00px;top:511.51px;font-size:12.09px;line-height:12.09px;color:#43474b;">Utilisation</div>
<div class="t" style="left:398.00px;top:539.60px;font-size:11.84px;line-height:11.84px;color:#43474b;">Availability</div>
<svg class="a" style="left:64.00px;top:518.30px;" width="9" height="14" viewBox="0 0 9 14"><path d="M1.5 1v11.7l6.3-5.85z" fill="#a8a8a8"/></svg>
<svg class="a" style="left:94.50px;top:513.00px;" width="30" height="30" viewBox="0 0 30 30"><defs><clipPath id="cav2"><circle cx="15" cy="15" r="15"/></clipPath></defs><g clip-path="url(#cav2)"><rect width="30" height="30" fill="#b9c2bb"/><rect x="0" y="6" width="9" height="18" fill="#e6e3dc"/><rect x="23" y="4" width="7" height="20" fill="#8c9087"/><ellipse cx="13.6" cy="12.8" rx="6.2" ry="7.2" fill="#c98b6e"/><path d="M7.5 10.5c-0.2-5 2.8-7.6 6.5-7.6s6.8 2.2 6.8 7c-1.5-2.2-4-3-6.8-3S9 7.8 7.5 10.5z" fill="#2a211e"/><path d="M0.5 30c1-6 5.5-9.5 13.5-9.5s12.5 3.5 13.5 9.5z" fill="#79a6d2"/><path d="M10 21l3.5 4 3.5-4z" fill="#5f8fbf"/></g></svg>
<div class="t" style="left:134.70px;top:513.81px;font-size:13.25px;line-height:13.25px;color:#2a6aa8;">Jordan O'brain</div>
<div class="t" style="left:134.70px;top:532.60px;font-size:11.25px;line-height:11.25px;color:#333;">Network Engineer</div>
<div class="t" style="left:330.07px;top:514.21px;font-size:12.50px;line-height:12.50px;color:#222;-webkit-text-stroke:0.2px #222;">$ 200.00</div>
<div class="t" style="left:491.11px;top:512.51px;font-size:11.50px;line-height:11.50px;color:#333;">124 h</div>
<div class="t" style="left:491.11px;top:539.60px;font-size:11.50px;line-height:11.50px;color:#333;">396 h</div>
<div class="a" style="left:45.70px;top:595.30px;width:495.30px;height:1.00px;background:#eeeeee;"></div>
<div class="a" style="left:392.50px;top:622.40px;width:148.50px;height:1.00px;background:#eeeeee;"></div>
<div class="a" style="left:392.50px;top:649.10px;width:148.50px;height:1.00px;background:#eeeeee;"></div>
<div class="a" style="left:316.30px;top:595.80px;width:1.00px;height:60.40px;background:#eeeeee;"></div>
<div class="a" style="left:392.00px;top:595.80px;width:1.00px;height:60.40px;background:#eeeeee;"></div>
<div class="a" style="left:459.00px;top:595.80px;width:1.00px;height:60.40px;background:#eeeeee;"></div>
<div class="t" style="left:398.00px;top:603.01px;font-size:12.09px;line-height:12.09px;color:#43474b;">Utilisation</div>
<div class="t" style="left:398.00px;top:630.50px;font-size:11.84px;line-height:11.84px;color:#43474b;">Availability</div>
<svg class="a" style="left:50.00px;top:607.80px;" width="15" height="8" viewBox="0 0 15 8"><path d="M1 1h13l-6.5 6.5z" fill="#a8a8a8"/></svg>
<div class="t" style="left:81.40px;top:607.72px;font-size:13.24px;line-height:13.24px;color:#333;">Network Operations Manager</div>
<div class="a" style="left:45.70px;top:655.70px;width:495.30px;height:1.00px;background:#eeeeee;"></div>
<div class="a" style="left:392.50px;top:683.10px;width:148.50px;height:1.00px;background:#eeeeee;"></div>
<div class="a" style="left:392.50px;top:709.30px;width:148.50px;height:1.00px;background:#eeeeee;"></div>
<div class="a" style="left:316.30px;top:656.20px;width:1.00px;height:69.80px;background:#eeeeee;"></div>
<div class="a" style="left:392.00px;top:656.20px;width:1.00px;height:69.80px;background:#eeeeee;"></div>
<div class="a" style="left:459.00px;top:656.20px;width:1.00px;height:69.80px;background:#eeeeee;"></div>
<div class="t" style="left:398.00px;top:663.51px;font-size:12.09px;line-height:12.09px;color:#43474b;">Utilisation</div>
<div class="t" style="left:398.00px;top:691.21px;font-size:11.84px;line-height:11.84px;color:#43474b;">Availability</div>
<svg class="a" style="left:64.00px;top:669.30px;" width="9" height="14" viewBox="0 0 9 14"><path d="M1.5 1v11.7l6.3-5.85z" fill="#a8a8a8"/></svg>
<svg class="a" style="left:94.50px;top:664.70px;" width="30" height="30" viewBox="0 0 30 30"><defs><clipPath id="cav3"><circle cx="15" cy="15" r="15"/></clipPath></defs><g clip-path="url(#cav3)"><rect width="30" height="30" fill="#fff"/><path d="M8 17c-1.5-9 1.5-14.5 7-14.5s8.5 5.5 7 14.5l-2 1.5h-10z" fill="#3d211a"/><ellipse cx="15" cy="11.8" rx="4.1" ry="5.4" fill="#ecd0c4"/><path d="M0.5 30c0-7 3-10.5 8-11.5l6.5 1.5 6.5-1.5c5 1 8 4.5 8 11.5z" fill="#161b2b"/><path d="M12.5 19l2.5 11 2.5-11-2.5 0.8z" fill="#f2f2f2"/></g></svg>
<div class="t" style="left:134.70px;top:665.71px;font-size:13.14px;line-height:13.14px;color:#2a6aa8;">Jessica Martin</div>
<div class="t" style="left:134.70px;top:683.70px;font-size:11.29px;line-height:11.29px;color:#333;">Network Operations Manager</div>
<div class="t" style="left:330.07px;top:666.40px;font-size:12.50px;line-height:12.50px;color:#222;-webkit-text-stroke:0.2px #222;">$ 170.00</div>
<div class="t" style="left:491.11px;top:664.51px;font-size:11.50px;line-height:11.50px;color:#333;">212 h</div>
<div class="t" style="left:491.11px;top:691.22px;font-size:11.50px;line-height:11.50px;color:#333;">316 h</div>
<div class="a" style="left:541.50px;top:231.00px;width:6.00px;height:365.30px;background:#a9a9a9;border-radius:3px;"></div>
<div class="a" style="left:547.50px;top:161.50px;width:4.50px;height:573.20px;background:linear-gradient(to right,#6fb0de,#86bde3 55%,#b8daf0);"></div>
<div class="a" style="left:547.50px;top:229.00px;width:4.50px;height:5.00px;background:linear-gradient(to right,#4f98cc,#6aaad8 55%,#9ccbe9);"></div>
<div class="a" style="left:43.50px;top:726.00px;width:504.00px;height:9.00px;background:#fff;"></div>
<div class="a" style="left:43.80px;top:726.00px;width:470.80px;height:6.50px;background:#b0b0b0;border-radius:3px;"></div>
<div class="a" style="left:43.80px;top:732.00px;width:504.20px;height:3.00px;background:linear-gradient(#a6a6a6,#8e8e8e);"></div>
<div class="a" style="left:554.8px;top:161.5px;width:963.60px;height:574px;overflow:hidden;">
<div class="a" style="left:0.00px;top:0.00px;width:963.60px;height:66.80px;background:#f4f4f4;border-top:1px solid #ececec;border-left:1px solid #dadada;box-sizing:border-box;box-shadow:0 1px 2px rgba(0,0,0,0.28);"></div>
<div class="a" style="left:0.00px;top:24.80px;width:963.60px;height:1.00px;background:#ebebeb;"></div>
<div class="a" style="left:60.30px;top:25.50px;width:1.00px;height:41.30px;background:#e2e2e2;"></div>
<div class="a" style="left:121.10px;top:25.50px;width:1.00px;height:41.30px;background:#e2e2e2;"></div>
<div class="a" style="left:181.90px;top:25.50px;width:1.00px;height:41.30px;background:#e2e2e2;"></div>
<div class="a" style="left:242.20px;top:0.00px;width:2.00px;height:66.80px;background:#d4d4d4;"></div>
<div class="a" style="left:303.50px;top:25.50px;width:1.00px;height:41.30px;background:#e2e2e2;"></div>
<div class="a" style="left:364.30px;top:25.50px;width:1.00px;height:41.30px;background:#e2e2e2;"></div>
<div class="a" style="left:425.10px;top:25.50px;width:1.00px;height:41.30px;background:#e2e2e2;"></div>
<div class="a" style="left:485.90px;top:25.50px;width:1.00px;height:41.30px;background:#e2e2e2;"></div>
<div class="a" style="left:546.20px;top:0.00px;width:2.00px;height:66.80px;background:#d4d4d4;"></div>
<div class="a" style="left:607.50px;top:25.50px;width:1.00px;height:41.30px;background:#e2e2e2;"></div>
<div class="a" style="left:668.30px;top:25.50px;width:1.00px;height:41.30px;background:#e2e2e2;"></div>
<div class="a" style="left:729.10px;top:25.50px;width:1.00px;height:41.30px;background:#e2e2e2;"></div>
<div class="a" style="left:789.90px;top:25.50px;width:1.00px;height:41.30px;background:#e2e2e2;"></div>
<div class="a" style="left:850.20px;top:0.00px;width:2.00px;height:66.80px;background:#d4d4d4;"></div>
<div class="a" style="left:911.50px;top:25.50px;width:1.00px;height:41.30px;background:#e2e2e2;"></div>
<div class="t" style="left:21.46px;top:32.91px;font-size:10.60px;line-height:10.60px;color:#6e6ef2;">Tue</div>
<div class="t" style="left:27.37px;top:50.50px;font-size:10.90px;line-height:10.90px;color:#4646ee;">1</div>
<div class="t" style="left:80.40px;top:32.91px;font-size:10.60px;line-height:10.60px;color:#6e6ef2;">Wed</div>
<div class="t" style="left:88.17px;top:50.50px;font-size:10.90px;line-height:10.90px;color:#4646ee;">2</div>
<div class="t" style="left:142.87px;top:32.91px;font-size:10.60px;line-height:10.60px;color:#6e6ef2;">Thu</div>
<div class="t" style="left:148.97px;top:50.50px;font-size:10.90px;line-height:10.90px;color:#4646ee;">3</div>
<div class="t" style="left:206.62px;top:32.91px;font-size:10.60px;line-height:10.60px;color:#6e6ef2;">Fri</div>
<div class="t" style="left:209.77px;top:50.50px;font-size:10.90px;line-height:10.90px;color:#4646ee;">4</div>
<div class="t" style="left:263.29px;top:32.91px;font-size:10.60px;line-height:10.60px;color:#6e6ef2;">Mon</div>
<div class="t" style="left:270.57px;top:50.50px;font-size:10.90px;line-height:10.90px;color:#4646ee;">7</div>
<div class="t" style="left:325.46px;top:32.91px;font-size:10.60px;line-height:10.60px;color:#6e6ef2;">Tue</div>
<div class="t" style="left:331.37px;top:50.50px;font-size:10.90px;line-height:10.90px;color:#4646ee;">8</div>
<div class="t" style="left:384.40px;top:32.91px;font-size:10.60px;line-height:10.60px;color:#6e6ef2;">Wed</div>
<div class="t" style="left:392.17px;top:50.50px;font-size:10.90px;line-height:10.90px;color:#4646ee;">9</div>
<div class="t" style="left:446.87px;top:32.91px;font-size:10.60px;line-height:10.60px;color:#6e6ef2;">Thu</div>
<div class="t" style="left:449.94px;top:50.50px;font-size:10.90px;line-height:10.90px;color:#4646ee;">10</div>
<div class="t" style="left:510.62px;top:32.91px;font-size:10.60px;line-height:10.60px;color:#6e6ef2;">Fri</div>
<div class="t" style="left:511.14px;top:50.50px;font-size:10.90px;line-height:10.90px;color:#4646ee;">11</div>
<div class="t" style="left:567.29px;top:32.91px;font-size:10.60px;line-height:10.60px;color:#6e6ef2;">Mon</div>
<div class="t" style="left:571.54px;top:50.50px;font-size:10.90px;line-height:10.90px;color:#4646ee;">14</div>
<div class="t" style="left:629.46px;top:32.91px;font-size:10.60px;line-height:10.60px;color:#6e6ef2;">Tue</div>
<div class="t" style="left:632.34px;top:50.50px;font-size:10.90px;line-height:10.90px;color:#4646ee;">15</div>
<div class="t" style="left:688.40px;top:32.91px;font-size:10.60px;line-height:10.60px;color:#6e6ef2;">Wed</div>
<div class="t" style="left:693.14px;top:50.50px;font-size:10.90px;line-height:10.90px;color:#4646ee;">16</div>
<div class="t" style="left:750.87px;top:32.91px;font-size:10.60px;line-height:10.60px;color:#6e6ef2;">Thu</div>
<div class="t" style="left:753.94px;top:50.50px;font-size:10.90px;line-height:10.90px;color:#4646ee;">17</div>
<div class="t" style="left:814.62px;top:32.91px;font-size:10.60px;line-height:10.60px;color:#6e6ef2;">Fri</div>
<div class="t" style="left:814.74px;top:50.50px;font-size:10.90px;line-height:10.90px;color:#4646ee;">18</div>
<div class="t" style="left:871.29px;top:32.91px;font-size:10.60px;line-height:10.60px;color:#6e6ef2;">Mon</div>
<div class="t" style="left:875.54px;top:50.50px;font-size:10.90px;line-height:10.90px;color:#4646ee;">21</div>
<div class="t" style="left:933.46px;top:32.91px;font-size:10.60px;line-height:10.60px;color:#6e6ef2;">Tue</div>
<div class="t" style="left:936.34px;top:50.50px;font-size:10.90px;line-height:10.90px;color:#4646ee;">22</div>
<div class="t" style="left:82.60px;top:4.50px;font-size:11.77px;line-height:11.77px;color:#2323ea;">OCT ' 24</div>
<div class="a" style="left:134.80px;top:3.50px;width:1.00px;height:14.00px;background:#8a8af2;"></div>
<div class="t" style="left:140.60px;top:4.51px;font-size:12.40px;line-height:12.40px;color:#2323ea;letter-spacing:1.1px;">w40</div>
<div class="t" style="left:356.20px;top:4.50px;font-size:11.77px;line-height:11.77px;color:#2323ea;">OCT ' 24</div>
<div class="a" style="left:408.40px;top:3.50px;width:1.00px;height:14.00px;background:#8a8af2;"></div>
<div class="t" style="left:414.20px;top:4.51px;font-size:12.40px;line-height:12.40px;color:#2323ea;letter-spacing:1.1px;">w41</div>
<div class="t" style="left:660.20px;top:4.50px;font-size:11.77px;line-height:11.77px;color:#2323ea;">OCT ' 24</div>
<div class="a" style="left:712.40px;top:3.50px;width:1.00px;height:14.00px;background:#8a8af2;"></div>
<div class="t" style="left:718.20px;top:4.51px;font-size:12.40px;line-height:12.40px;color:#2323ea;letter-spacing:1.1px;">w42</div>
<div class="a" style="left:60.30px;top:68.00px;width:1.00px;height:496.50px;background:#eeeeee;"></div>
<div class="a" style="left:121.10px;top:68.00px;width:1.00px;height:496.50px;background:#eeeeee;"></div>
<div class="a" style="left:181.90px;top:68.00px;width:1.00px;height:496.50px;background:#eeeeee;"></div>
<div class="a" style="left:242.70px;top:68.00px;width:1.00px;height:496.50px;background:#eeeeee;"></div>
<div class="a" style="left:303.50px;top:68.00px;width:1.00px;height:496.50px;background:#eeeeee;"></div>
<div class="a" style="left:364.30px;top:68.00px;width:1.00px;height:496.50px;background:#eeeeee;"></div>
<div class="a" style="left:425.10px;top:68.00px;width:1.00px;height:496.50px;background:#eeeeee;"></div>
<div class="a" style="left:485.90px;top:68.00px;width:1.00px;height:496.50px;background:#eeeeee;"></div>
<div class="a" style="left:546.70px;top:68.00px;width:1.00px;height:496.50px;background:#eeeeee;"></div>
<div class="a" style="left:607.50px;top:68.00px;width:1.00px;height:496.50px;background:#eeeeee;"></div>
<div class="a" style="left:668.30px;top:68.00px;width:1.00px;height:496.50px;background:#eeeeee;"></div>
<div class="a" style="left:729.10px;top:68.00px;width:1.00px;height:496.50px;background:#eeeeee;"></div>
<div class="a" style="left:789.90px;top:68.00px;width:1.00px;height:496.50px;background:#eeeeee;"></div>
<div class="a" style="left:850.70px;top:68.00px;width:1.00px;height:496.50px;background:#eeeeee;"></div>
<div class="a" style="left:911.50px;top:68.00px;width:1.00px;height:496.50px;background:#eeeeee;"></div>
<div class="a" style="left:0.00px;top:128.80px;width:963.60px;height:1.00px;background:#eeeeee;"></div>
<div class="a" style="left:0.00px;top:220.60px;width:963.60px;height:1.00px;background:#eeeeee;"></div>
<div class="a" style="left:0.00px;top:342.60px;width:963.60px;height:1.00px;background:#eeeeee;"></div>
<div class="a" style="left:0.00px;top:433.70px;width:963.60px;height:1.00px;background:#eeeeee;"></div>
<div class="a" style="left:0.00px;top:494.40px;width:963.60px;height:1.00px;background:#eeeeee;"></div>
<svg class="a" style="left:0.30px;top:133.60px;" width="242.9" height="19" viewBox="0 0 242.9 19"><rect x="0" y="0" width="242.90" height="19" fill="#6a8d6a"/><rect x="0" y="0" width="242.90" height="19" fill="url(#chvG)"/><rect x="0" y="0" width="242.90" height="1.8" fill="#5a7d5a"/><rect x="0" y="17.2" width="242.90" height="1.8" fill="#5a7d5a"/></svg>
<div class="a" style="left:5.10px;top:135.60px;width:113.89px;height:15.00px;background:#dfe7df;border-radius:6px;clip-path:inset(-1px 0.00px -1px -1px);"></div>
<div class="t" style="left:15.10px;top:137.60px;font-size:12.40px;line-height:12.40px;color:#383838;clip-path:inset(-3px 0.00px -3px 0);">8 hr/day allocated</div>
<svg class="a" style="left:243.50px;top:133.60px;" width="364.5" height="19" viewBox="0 0 364.5 19"><rect x="0" y="0" width="364.50" height="19" fill="#d388b9"/><rect x="0" y="0" width="364.50" height="19" fill="url(#chvP)"/><rect x="0" y="0" width="364.50" height="1.8" fill="#d07db2"/><rect x="0" y="17.2" width="364.50" height="1.8" fill="#d07db2"/></svg>
<div class="a" style="left:248.30px;top:135.60px;width:124.23px;height:15.00px;background:#f3e1ec;border-radius:6px;clip-path:inset(-1px 0.00px -1px -1px);"></div>
<div class="t" style="left:258.30px;top:137.60px;font-size:12.40px;line-height:12.40px;color:#383838;clip-path:inset(-3px 0.00px -3px 0);">1.6 hr/day allocated</div>
<svg class="a" style="left:608.30px;top:133.60px;" width="242.9" height="19" viewBox="0 0 242.9 19"><rect x="0" y="0" width="242.90" height="19" fill="#88a9d7"/><rect x="0" y="0" width="242.90" height="19" fill="url(#chvB)"/><rect x="0" y="0" width="242.90" height="1.8" fill="#779bcf"/><rect x="0" y="17.2" width="242.90" height="1.8" fill="#779bcf"/></svg>
<div class="a" style="left:613.10px;top:135.60px;width:113.89px;height:15.00px;background:#e2e9f4;border-radius:6px;clip-path:inset(-1px 0.00px -1px -1px);"></div>
<div class="t" style="left:623.10px;top:137.60px;font-size:12.40px;line-height:12.40px;color:#383838;clip-path:inset(-3px 0.00px -3px 0);">0 hr/day allocated</div>
<svg class="a" style="left:851.50px;top:133.60px;" width="117.1" height="19" viewBox="0 0 117.1 19"><rect x="0" y="0" width="117.10" height="19" fill="#d388b9"/><rect x="0" y="0" width="117.10" height="19" fill="url(#chvP)"/><rect x="0" y="0" width="117.10" height="1.8" fill="#d07db2"/><rect x="0" y="17.2" width="117.10" height="1.8" fill="#d07db2"/></svg>
<div class="a" style="left:856.30px;top:135.60px;width:124.23px;height:15.00px;background:#f3e1ec;border-radius:6px;clip-path:inset(-1px 11.93px -1px -1px);"></div>
<div class="t" style="left:866.30px;top:137.60px;font-size:12.40px;line-height:12.40px;color:#383838;clip-path:inset(-3px 5.93px -3px 0);">1.6 hr/day allocated</div>
<svg class="a" style="left:0.30px;top:159.50px;" width="242.9" height="19" viewBox="0 0 242.9 19"><rect x="0" y="0" width="242.90" height="19" fill="#d6ebf6"/><rect x="0" y="0" width="242.90" height="19" fill="url(#chvL)"/><rect x="0" y="0" width="242.90" height="1.8" fill="#d3e9f5"/><rect x="0" y="17.2" width="242.90" height="1.8" fill="#d3e9f5"/></svg>
<div class="a" style="left:5.10px;top:161.50px;width:85.62px;height:15.00px;background:#eef7fb;border-radius:6px;clip-path:inset(-1px 0.00px -1px -1px);"></div>
<div class="t" style="left:15.10px;top:163.51px;font-size:12.40px;line-height:12.40px;color:#383838;clip-path:inset(-3px 0.00px -3px 0);">0 hr/day free</div>
<svg class="a" style="left:243.50px;top:159.50px;" width="364.5" height="19" viewBox="0 0 364.5 19"><rect x="0" y="0" width="364.50" height="19" fill="#8ecbe7"/><rect x="0" y="0" width="364.50" height="19" fill="url(#chvM)"/><rect x="0" y="0" width="364.50" height="1.8" fill="#7dc0e1"/><rect x="0" y="17.2" width="364.50" height="1.8" fill="#7dc0e1"/></svg>
<div class="a" style="left:248.30px;top:161.50px;width:95.96px;height:15.00px;background:#e6f3f9;border-radius:6px;clip-path:inset(-1px 0.00px -1px -1px);"></div>
<div class="t" style="left:258.30px;top:163.51px;font-size:12.40px;line-height:12.40px;color:#383838;clip-path:inset(-3px 0.00px -3px 0);">6.4 hr/day free</div>
<svg class="a" style="left:608.30px;top:159.50px;" width="242.9" height="19" viewBox="0 0 242.9 19"><rect x="0" y="0" width="242.90" height="19" fill="#6189b4"/><rect x="0" y="0" width="242.90" height="19" fill="url(#chvD)"/><rect x="0" y="0" width="242.90" height="1.8" fill="#4f79a5"/><rect x="0" y="17.2" width="242.90" height="1.8" fill="#4f79a5"/></svg>
<div class="a" style="left:613.10px;top:161.50px;width:85.62px;height:15.00px;background:#dce3ed;border-radius:6px;clip-path:inset(-1px 0.00px -1px -1px);"></div>
<div class="t" style="left:623.10px;top:163.51px;font-size:12.40px;line-height:12.40px;color:#383838;clip-path:inset(-3px 0.00px -3px 0);">8 hr/day free</div>
<svg class="a" style="left:851.50px;top:159.50px;" width="117.1" height="19" viewBox="0 0 117.1 19"><rect x="0" y="0" width="117.10" height="19" fill="#8ecbe7"/><rect x="0" y="0" width="117.10" height="19" fill="url(#chvM)"/><rect x="0" y="0" width="117.10" height="1.8" fill="#7dc0e1"/><rect x="0" y="17.2" width="117.10" height="1.8" fill="#7dc0e1"/></svg>
<div class="a" style="left:856.30px;top:161.50px;width:95.96px;height:15.00px;background:#e6f3f9;border-radius:6px;clip-path:inset(-1px 0.00px -1px -1px);"></div>
<div class="t" style="left:866.30px;top:163.51px;font-size:12.40px;line-height:12.40px;color:#383838;clip-path:inset(-3px 0.00px -3px 0);">6.4 hr/day free</div>
<div class="a" style="left:0.10px;top:185.30px;width:241.30px;height:27.50px;background:#c46c9e;border-radius:5px;box-shadow:0 2px 2.5px rgba(0,0,0,0.22);"></div>
<div class="t" style="left:5.70px;top:193.70px;font-size:10.87px;line-height:10.87px;color:#fff;-webkit-text-stroke:0.25px #fff;">01. Fiber Optic Network Exp...</div>
<div class="a" style="left:159.40px;top:187.30px;width:17.20px;height:17.20px;background:#fff;border-radius:50%;"></div>
<div class="a" style="left:179.30px;top:187.30px;width:17.20px;height:17.20px;background:#fff;border-radius:50%;"></div>
<div class="a" style="left:199.20px;top:187.30px;width:17.20px;height:17.20px;background:#fff;border-radius:50%;"></div>
<svg class="a" style="left:159.40px;top:187.30px;" width="17.2" height="17.2" viewBox="0 0 17.2 17.2"><polygon points="8.60,3.20 10.08,6.76 13.93,7.07 11.00,9.58 11.89,13.33 8.60,11.32 5.31,13.33 6.20,9.58 3.27,7.07 7.12,6.76" fill="#5e7d87"/></svg>
<div class="a" style="left:183.60px;top:191.60px;width:8.60px;height:8.60px;background:#d46fa0;"></div>
<svg class="a" style="left:199.20px;top:187.30px;" width="17.2" height="17.2" viewBox="0 0 17.2 17.2"><path d="M8.6 3.3L13.6 12.2H3.6z" fill="#ff1744"/></svg>
<div class="a" style="left:243.40px;top:185.30px;width:180.40px;height:27.50px;background:#2b5b7e;border-radius:5px;box-shadow:0 2px 2.5px rgba(0,0,0,0.22);"></div>
<div class="t" style="left:249.00px;top:193.70px;font-size:11.24px;line-height:11.24px;color:#fff;-webkit-text-stroke:0.25px #fff;">Cloud Migration</div>
<div class="a" style="left:334.20px;top:187.30px;width:17.20px;height:17.20px;background:#fff;border-radius:50%;"></div>
<div class="a" style="left:354.10px;top:187.30px;width:17.20px;height:17.20px;background:#fff;border-radius:50%;"></div>
<div class="a" style="left:374.00px;top:187.30px;width:17.20px;height:17.20px;background:#fff;border-radius:50%;"></div>
<svg class="a" style="left:334.20px;top:187.30px;" width="17.2" height="17.2" viewBox="0 0 17.2 17.2"><polygon points="8.60,3.20 10.08,6.76 13.93,7.07 11.00,9.58 11.89,13.33 8.60,11.32 5.31,13.33 6.20,9.58 3.27,7.07 7.12,6.76" fill="#1e8c8c"/></svg>
<div class="a" style="left:358.40px;top:191.60px;width:8.60px;height:8.60px;background:#5b6896;"></div>
<svg class="a" style="left:374.00px;top:187.30px;" width="17.2" height="17.2" viewBox="0 0 17.2 17.2"><path d="M8.6 3.3L13.6 12.2H3.6z" fill="#ff1744"/></svg>
<div class="a" style="left:425.80px;top:185.30px;width:180.65px;height:27.50px;background:#c46c9e;border-radius:5px;box-shadow:0 2px 2.5px rgba(0,0,0,0.22);"></div>
<div class="t" style="left:431.40px;top:194.71px;font-size:10.44px;line-height:10.44px;color:#fff;-webkit-text-stroke:0.25px #fff;">01. Fiber Optic ...</div>
<div class="a" style="left:524.20px;top:187.30px;width:17.20px;height:17.20px;background:#fff;border-radius:50%;"></div>
<div class="a" style="left:544.10px;top:187.30px;width:17.20px;height:17.20px;background:#fff;border-radius:50%;"></div>
<div class="a" style="left:564.00px;top:187.30px;width:17.20px;height:17.20px;background:#fff;border-radius:50%;"></div>
<svg class="a" style="left:524.20px;top:187.30px;" width="17.2" height="17.2" viewBox="0 0 17.2 17.2"><polygon points="8.60,3.20 10.08,6.76 13.93,7.07 11.00,9.58 11.89,13.33 8.60,11.32 5.31,13.33 6.20,9.58 3.27,7.07 7.12,6.76" fill="#6ab0e4"/></svg>
<div class="a" style="left:548.40px;top:191.60px;width:8.60px;height:8.60px;background:#5b6896;"></div>
<svg class="a" style="left:564.00px;top:187.30px;" width="17.2" height="17.2" viewBox="0 0 17.2 17.2"><path d="M8.6 3.3L13.6 12.2H3.6z" fill="#ff1744"/></svg>
<div class="a" style="left:851.80px;top:185.30px;width:126.80px;height:27.50px;background:#4a8196;border-radius:5px;box-shadow:0 2px 2.5px rgba(0,0,0,0.22);"></div>
<div class="t" style="left:857.40px;top:193.70px;font-size:10.95px;line-height:10.95px;color:#fff;-webkit-text-stroke:0.25px #fff;">02. Small Cell Deployment</div>
<div class="a" style="left:996.60px;top:187.30px;width:17.20px;height:17.20px;background:#fff;border-radius:50%;"></div>
<div class="a" style="left:1016.50px;top:187.30px;width:17.20px;height:17.20px;background:#fff;border-radius:50%;"></div>
<div class="a" style="left:1036.40px;top:187.30px;width:17.20px;height:17.20px;background:#fff;border-radius:50%;"></div>
<svg class="a" style="left:996.60px;top:187.30px;" width="17.2" height="17.2" viewBox="0 0 17.2 17.2"><polygon points="8.60,3.20 10.08,6.76 13.93,7.07 11.00,9.58 11.89,13.33 8.60,11.32 5.31,13.33 6.20,9.58 3.27,7.07 7.12,6.76" fill="#555"/></svg>
<div class="a" style="left:1020.80px;top:191.60px;width:8.60px;height:8.60px;background:#f7931e;"></div>
<svg class="a" style="left:1036.40px;top:187.30px;" width="17.2" height="17.2" viewBox="0 0 17.2 17.2"><path d="M8.6 3.3L13.6 12.2H3.6z" fill="#ff1744"/></svg>
<svg class="a" style="left:0.30px;top:225.20px;" width="60.5" height="19" viewBox="0 0 60.5 19"><rect x="0" y="0" width="60.50" height="19" fill="#88a9d7"/><rect x="0" y="0" width="60.50" height="19" fill="url(#chvB)"/><rect x="0" y="0" width="60.50" height="1.8" fill="#779bcf"/><rect x="0" y="17.2" width="60.50" height="1.8" fill="#779bcf"/></svg>
<div class="a" style="left:5.10px;top:227.20px;width:113.89px;height:15.00px;background:#e2e9f4;border-radius:6px;clip-path:inset(-1px 58.19px -1px -1px);"></div>
<div class="t" style="left:15.10px;top:229.22px;font-size:12.40px;line-height:12.40px;color:#383838;clip-path:inset(-3px 52.19px -3px 0);">0 hr/day allocated</div>
<svg class="a" style="left:61.10px;top:225.20px;" width="182.1" height="19" viewBox="0 0 182.1 19"><rect x="0" y="0" width="182.10" height="19" fill="#d388b9"/><rect x="0" y="0" width="182.10" height="19" fill="url(#chvP)"/><rect x="0" y="0" width="182.10" height="1.8" fill="#d07db2"/><rect x="0" y="17.2" width="182.10" height="1.8" fill="#d07db2"/></svg>
<div class="a" style="left:65.90px;top:227.20px;width:124.23px;height:15.00px;background:#f3e1ec;border-radius:6px;clip-path:inset(-1px 0.00px -1px -1px);"></div>
<div class="t" style="left:75.90px;top:229.22px;font-size:12.40px;line-height:12.40px;color:#383838;clip-path:inset(-3px 0.00px -3px 0);">1.6 hr/day allocated</div>
<svg class="a" style="left:243.50px;top:225.20px;" width="725.1" height="19" viewBox="0 0 725.1 19"><rect x="0" y="0" width="725.10" height="19" fill="#6a8d6a"/><rect x="0" y="0" width="725.10" height="19" fill="url(#chvG)"/><rect x="0" y="0" width="725.10" height="1.8" fill="#5a7d5a"/><rect x="0" y="17.2" width="725.10" height="1.8" fill="#5a7d5a"/></svg>
<div class="a" style="left:248.30px;top:227.20px;width:113.89px;height:15.00px;background:#dfe7df;border-radius:6px;clip-path:inset(-1px 0.00px -1px -1px);"></div>
<div class="t" style="left:258.30px;top:229.22px;font-size:12.40px;line-height:12.40px;color:#383838;clip-path:inset(-3px 0.00px -3px 0);">8 hr/day allocated</div>
<svg class="a" style="left:0.30px;top:250.00px;" width="60.5" height="19" viewBox="0 0 60.5 19"><rect x="0" y="0" width="60.50" height="19" fill="#6189b4"/><rect x="0" y="0" width="60.50" height="19" fill="url(#chvD)"/><rect x="0" y="0" width="60.50" height="1.8" fill="#4f79a5"/><rect x="0" y="17.2" width="60.50" height="1.8" fill="#4f79a5"/></svg>
<div class="a" style="left:5.10px;top:252.00px;width:85.62px;height:15.00px;background:#dce3ed;border-radius:6px;clip-path:inset(-1px 29.92px -1px -1px);"></div>
<div class="t" style="left:15.10px;top:254.01px;font-size:12.40px;line-height:12.40px;color:#383838;clip-path:inset(-3px 23.92px -3px 0);">8 hr/day free</div>
<svg class="a" style="left:61.10px;top:250.00px;" width="182.1" height="19" viewBox="0 0 182.1 19"><rect x="0" y="0" width="182.10" height="19" fill="#8ecbe7"/><rect x="0" y="0" width="182.10" height="19" fill="url(#chvM)"/><rect x="0" y="0" width="182.10" height="1.8" fill="#7dc0e1"/><rect x="0" y="17.2" width="182.10" height="1.8" fill="#7dc0e1"/></svg>
<div class="a" style="left:65.90px;top:252.00px;width:95.96px;height:15.00px;background:#e6f3f9;border-radius:6px;clip-path:inset(-1px 0.00px -1px -1px);"></div>
<div class="t" style="left:75.90px;top:254.01px;font-size:12.40px;line-height:12.40px;color:#383838;clip-path:inset(-3px 0.00px -3px 0);">6.4 hr/day free</div>
<svg class="a" style="left:243.50px;top:250.00px;" width="725.1" height="19" viewBox="0 0 725.1 19"><rect x="0" y="0" width="725.10" height="19" fill="#d6ebf6"/><rect x="0" y="0" width="725.10" height="19" fill="url(#chvL)"/><rect x="0" y="0" width="725.10" height="1.8" fill="#d3e9f5"/><rect x="0" y="17.2" width="725.10" height="1.8" fill="#d3e9f5"/></svg>
<div class="a" style="left:248.30px;top:252.00px;width:85.62px;height:15.00px;background:#eef7fb;border-radius:6px;clip-path:inset(-1px 0.00px -1px -1px);"></div>
<div class="t" style="left:258.30px;top:254.01px;font-size:12.40px;line-height:12.40px;color:#383838;clip-path:inset(-3px 0.00px -3px 0);">0 hr/day free</div>
<div class="a" style="left:60.80px;top:276.60px;width:180.20px;height:27.50px;background:#76559d;border-radius:5px;box-shadow:0 2px 2.5px rgba(0,0,0,0.22);"></div>
<div class="t" style="left:66.40px;top:285.00px;font-size:10.62px;line-height:10.62px;color:#fff;-webkit-text-stroke:0.25px #fff;">PSA Training</div>
<div class="a" style="left:134.30px;top:278.60px;width:17.20px;height:17.20px;background:#fff;border-radius:50%;"></div>
<div class="a" style="left:154.20px;top:278.60px;width:17.20px;height:17.20px;background:#fff;border-radius:50%;"></div>
<div class="a" style="left:174.10px;top:278.60px;width:17.20px;height:17.20px;background:#fff;border-radius:50%;"></div>
<svg class="a" style="left:134.30px;top:278.60px;" width="17.2" height="17.2" viewBox="0 0 17.2 17.2"><polygon points="8.60,3.20 10.08,6.76 13.93,7.07 11.00,9.58 11.89,13.33 8.60,11.32 5.31,13.33 6.20,9.58 3.27,7.07 7.12,6.76" fill="#6aa6a6"/></svg>
<div class="a" style="left:158.50px;top:282.90px;width:8.60px;height:8.60px;background:#5b5f96;"></div>
<svg class="a" style="left:174.10px;top:278.60px;" width="17.2" height="17.2" viewBox="0 0 17.2 17.2"><path d="M8.6 3.3L13.6 12.2H3.6z" fill="#ff1744"/></svg>
<div class="a" style="left:243.60px;top:276.60px;width:301.90px;height:27.50px;background:#1b7320;border-radius:5px;box-shadow:0 2px 2.5px rgba(0,0,0,0.22);"></div>
<div class="t" style="left:249.20px;top:285.00px;font-size:11.08px;line-height:11.08px;color:#fff;-webkit-text-stroke:0.25px #fff;">Brand Positioning Audit</div>
<div class="a" style="left:370.60px;top:278.60px;width:17.20px;height:17.20px;background:#fff;border-radius:50%;"></div>
<div class="a" style="left:390.50px;top:278.60px;width:17.20px;height:17.20px;background:#fff;border-radius:50%;"></div>
<div class="a" style="left:410.40px;top:278.60px;width:17.20px;height:17.20px;background:#fff;border-radius:50%;"></div>
<svg class="a" style="left:370.60px;top:278.60px;" width="17.2" height="17.2" viewBox="0 0 17.2 17.2"><polygon points="8.60,3.20 10.08,6.76 13.93,7.07 11.00,9.58 11.89,13.33 8.60,11.32 5.31,13.33 6.20,9.58 3.27,7.07 7.12,6.76" fill="#6aa6a6"/></svg>
<div class="a" style="left:394.80px;top:282.90px;width:8.60px;height:8.60px;background:#5b5f96;"></div>
<svg class="a" style="left:410.40px;top:278.60px;" width="17.2" height="17.2" viewBox="0 0 17.2 17.2"><path d="M8.6 3.3L13.6 12.2H3.6z" fill="#ff1744"/></svg>
<div class="a" style="left:547.50px;top:276.60px;width:180.70px;height:27.50px;background:#1b7320;border-radius:5px;box-shadow:0 2px 2.5px rgba(0,0,0,0.22);"></div>
<div class="t" style="left:553.10px;top:285.01px;font-size:10.60px;line-height:10.60px;color:#fff;-webkit-text-stroke:0.25px #fff;">Brand Positionin...</div>
<div class="a" style="left:645.60px;top:278.60px;width:17.20px;height:17.20px;background:#fff;border-radius:50%;"></div>
<div class="a" style="left:665.50px;top:278.60px;width:17.20px;height:17.20px;background:#fff;border-radius:50%;"></div>
<div class="a" style="left:685.40px;top:278.60px;width:17.20px;height:17.20px;background:#fff;border-radius:50%;"></div>
<svg class="a" style="left:645.60px;top:278.60px;" width="17.2" height="17.2" viewBox="0 0 17.2 17.2"><polygon points="8.60,3.20 10.08,6.76 13.93,7.07 11.00,9.58 11.89,13.33 8.60,11.32 5.31,13.33 6.20,9.58 3.27,7.07 7.12,6.76" fill="#1a87a8"/></svg>
<div class="a" style="left:669.80px;top:282.90px;width:8.60px;height:8.60px;background:#f7931e;"></div>
<svg class="a" style="left:685.40px;top:278.60px;" width="17.2" height="17.2" viewBox="0 0 17.2 17.2"><path d="M8.6 3.3L13.6 12.2H3.6z" fill="#ff1744"/></svg>
<div class="a" style="left:730.20px;top:276.60px;width:248.40px;height:27.50px;background:#4a8196;border-radius:5px;box-shadow:0 2px 2.5px rgba(0,0,0,0.22);"></div>
<div class="t" style="left:735.80px;top:285.01px;font-size:10.91px;line-height:10.91px;color:#fff;-webkit-text-stroke:0.25px #fff;">02. Small Cell Deployment</div>
<div class="a" style="left:871.10px;top:278.60px;width:17.20px;height:17.20px;background:#fff;border-radius:50%;"></div>
<div class="a" style="left:891.00px;top:278.60px;width:17.20px;height:17.20px;background:#fff;border-radius:50%;"></div>
<div class="a" style="left:910.90px;top:278.60px;width:17.20px;height:17.20px;background:#fff;border-radius:50%;"></div>
<svg class="a" style="left:871.10px;top:278.60px;" width="17.2" height="17.2" viewBox="0 0 17.2 17.2"><polygon points="8.60,3.20 10.08,6.76 13.93,7.07 11.00,9.58 11.89,13.33 8.60,11.32 5.31,13.33 6.20,9.58 3.27,7.07 7.12,6.76" fill="#555555"/></svg>
<div class="a" style="left:895.30px;top:282.90px;width:8.60px;height:8.60px;background:#f7931e;"></div>
<svg class="a" style="left:910.90px;top:278.60px;" width="17.2" height="17.2" viewBox="0 0 17.2 17.2"><path d="M8.6 3.3L13.6 12.2H3.6z" fill="#ff1744"/></svg>
<svg class="a" style="left:0.30px;top:347.70px;" width="850.9" height="19" viewBox="0 0 850.9 19"><rect x="0" y="0" width="850.90" height="19" fill="#90a699"/><rect x="0" y="0" width="850.90" height="19" fill="url(#chvS)"/><rect x="0" y="0" width="850.90" height="1.8" fill="#90a699"/><rect x="0" y="17.2" width="850.90" height="1.8" fill="#90a699"/></svg>
<div class="a" style="left:5.10px;top:349.70px;width:113.89px;height:15.00px;background:#e6ebe8;border-radius:6px;clip-path:inset(-1px 0.00px -1px -1px);"></div>
<div class="t" style="left:15.10px;top:351.72px;font-size:12.40px;line-height:12.40px;color:#383838;clip-path:inset(-3px 0.00px -3px 0);">6 hr/day allocated</div>
<svg class="a" style="left:851.50px;top:347.70px;" width="117.1" height="19" viewBox="0 0 117.1 19"><rect x="0" y="0" width="117.10" height="19" fill="#88a9d7"/><rect x="0" y="0" width="117.10" height="19" fill="url(#chvB)"/><rect x="0" y="0" width="117.10" height="1.8" fill="#779bcf"/><rect x="0" y="17.2" width="117.10" height="1.8" fill="#779bcf"/></svg>
<div class="a" style="left:856.30px;top:349.70px;width:113.89px;height:15.00px;background:#e2e9f4;border-radius:6px;clip-path:inset(-1px 1.59px -1px -1px);"></div>
<div class="t" style="left:866.30px;top:351.72px;font-size:12.40px;line-height:12.40px;color:#383838;clip-path:inset(-3px 0.00px -3px 0);">0 hr/day allocated</div>
<svg class="a" style="left:0.30px;top:373.30px;" width="850.9" height="19" viewBox="0 0 850.9 19"><rect x="0" y="0" width="850.90" height="19" fill="#b6dcee"/><rect x="0" y="0" width="850.90" height="19" fill="url(#chvML)"/><rect x="0" y="0" width="850.90" height="1.8" fill="#b3daed"/><rect x="0" y="17.2" width="850.90" height="1.8" fill="#b3daed"/></svg>
<div class="a" style="left:5.10px;top:375.30px;width:85.62px;height:15.00px;background:#ebf5fa;border-radius:6px;clip-path:inset(-1px 0.00px -1px -1px);"></div>
<div class="t" style="left:15.10px;top:377.31px;font-size:12.40px;line-height:12.40px;color:#383838;clip-path:inset(-3px 0.00px -3px 0);">2 hr/day free</div>
<svg class="a" style="left:851.50px;top:373.30px;" width="117.1" height="19" viewBox="0 0 117.1 19"><rect x="0" y="0" width="117.10" height="19" fill="#6189b4"/><rect x="0" y="0" width="117.10" height="19" fill="url(#chvD)"/><rect x="0" y="0" width="117.10" height="1.8" fill="#4f79a5"/><rect x="0" y="17.2" width="117.10" height="1.8" fill="#4f79a5"/></svg>
<div class="a" style="left:856.30px;top:375.30px;width:85.62px;height:15.00px;background:#dce3ed;border-radius:6px;clip-path:inset(-1px 0.00px -1px -1px);"></div>
<div class="t" style="left:866.30px;top:377.31px;font-size:12.40px;line-height:12.40px;color:#383838;clip-path:inset(-3px 0.00px -3px 0);">8 hr/day free</div>
<div class="a" style="left:0.10px;top:398.90px;width:849.90px;height:27.50px;background:#4a8196;border-radius:5px;box-shadow:0 2px 2.5px rgba(0,0,0,0.22);"></div>
<div class="t" style="left:5.70px;top:407.31px;font-size:10.95px;line-height:10.95px;color:#fff;-webkit-text-stroke:0.25px #fff;">02. Small Cell Deployment</div>
<div class="a" style="left:141.00px;top:400.90px;width:17.20px;height:17.20px;background:#fff;border-radius:50%;"></div>
<div class="a" style="left:160.90px;top:400.90px;width:17.20px;height:17.20px;background:#fff;border-radius:50%;"></div>
<div class="a" style="left:180.80px;top:400.90px;width:17.20px;height:17.20px;background:#fff;border-radius:50%;"></div>
<svg class="a" style="left:141.00px;top:400.90px;" width="17.2" height="17.2" viewBox="0 0 17.2 17.2"><polygon points="8.60,3.20 10.08,6.76 13.93,7.07 11.00,9.58 11.89,13.33 8.60,11.32 5.31,13.33 6.20,9.58 3.27,7.07 7.12,6.76" fill="#4a90d9"/></svg>
<div class="a" style="left:165.20px;top:405.20px;width:8.60px;height:8.60px;background:#f7931e;"></div>
<svg class="a" style="left:180.80px;top:400.90px;" width="17.2" height="17.2" viewBox="0 0 17.2 17.2"><path d="M8.6 3.3L13.6 12.2H3.6z" fill="#ff1744"/></svg>
<svg class="a" style="left:0.30px;top:499.80px;" width="850.9" height="19" viewBox="0 0 850.9 19"><rect x="0" y="0" width="850.90" height="19" fill="#6a8d6a"/><rect x="0" y="0" width="850.90" height="19" fill="url(#chvG)"/><rect x="0" y="0" width="850.90" height="1.8" fill="#5a7d5a"/><rect x="0" y="17.2" width="850.90" height="1.8" fill="#5a7d5a"/></svg>
<div class="a" style="left:5.10px;top:501.80px;width:113.89px;height:15.00px;background:#dfe7df;border-radius:6px;clip-path:inset(-1px 0.00px -1px -1px);"></div>
<div class="t" style="left:15.10px;top:503.81px;font-size:12.40px;line-height:12.40px;color:#383838;clip-path:inset(-3px 0.00px -3px 0);">8 hr/day allocated</div>
<svg class="a" style="left:851.50px;top:499.80px;" width="117.1" height="19" viewBox="0 0 117.1 19"><rect x="0" y="0" width="117.10" height="19" fill="#88a9d7"/><rect x="0" y="0" width="117.10" height="19" fill="url(#chvB)"/><rect x="0" y="0" width="117.10" height="1.8" fill="#779bcf"/><rect x="0" y="17.2" width="117.10" height="1.8" fill="#779bcf"/></svg>
<div class="a" style="left:856.30px;top:501.80px;width:113.89px;height:15.00px;background:#e2e9f4;border-radius:6px;clip-path:inset(-1px 1.59px -1px -1px);"></div>
<div class="t" style="left:866.30px;top:503.81px;font-size:12.40px;line-height:12.40px;color:#383838;clip-path:inset(-3px 0.00px -3px 0);">0 hr/day allocated</div>
<svg class="a" style="left:0.30px;top:524.40px;" width="850.9" height="19" viewBox="0 0 850.9 19"><rect x="0" y="0" width="850.90" height="19" fill="#d6ebf6"/><rect x="0" y="0" width="850.90" height="19" fill="url(#chvL)"/><rect x="0" y="0" width="850.90" height="1.8" fill="#d3e9f5"/><rect x="0" y="17.2" width="850.90" height="1.8" fill="#d3e9f5"/></svg>
<div class="a" style="left:5.10px;top:526.40px;width:85.62px;height:15.00px;background:#eef7fb;border-radius:6px;clip-path:inset(-1px 0.00px -1px -1px);"></div>
<div class="t" style="left:15.10px;top:528.41px;font-size:12.40px;line-height:12.40px;color:#383838;clip-path:inset(-3px 0.00px -3px 0);">0 hr/day free</div>
<svg class="a" style="left:851.50px;top:524.40px;" width="117.1" height="19" viewBox="0 0 117.1 19"><rect x="0" y="0" width="117.10" height="19" fill="#6189b4"/><rect x="0" y="0" width="117.10" height="19" fill="url(#chvD)"/><rect x="0" y="0" width="117.10" height="1.8" fill="#4f79a5"/><rect x="0" y="17.2" width="117.10" height="1.8" fill="#4f79a5"/></svg>
<div class="a" style="left:856.30px;top:526.40px;width:85.62px;height:15.00px;background:#dce3ed;border-radius:6px;clip-path:inset(-1px 0.00px -1px -1px);"></div>
<div class="t" style="left:866.30px;top:528.41px;font-size:12.40px;line-height:12.40px;color:#383838;clip-path:inset(-3px 0.00px -3px 0);">8 hr/day free</div>
<div class="a" style="left:0.10px;top:551.00px;width:484.10px;height:27.50px;background:#2b5b7e;border-radius:5px;box-shadow:0 2px 2.5px rgba(0,0,0,0.22);"></div>
<div class="t" style="left:5.70px;top:559.41px;font-size:11.24px;line-height:11.24px;color:#fff;-webkit-text-stroke:0.25px #fff;">Cloud Migration</div>
<div class="a" style="left:90.10px;top:553.00px;width:17.20px;height:17.20px;background:#fff;border-radius:50%;"></div>
<div class="a" style="left:110.00px;top:553.00px;width:17.20px;height:17.20px;background:#fff;border-radius:50%;"></div>
<div class="a" style="left:129.90px;top:553.00px;width:17.20px;height:17.20px;background:#fff;border-radius:50%;"></div>
<svg class="a" style="left:90.10px;top:553.00px;" width="17.2" height="17.2" viewBox="0 0 17.2 17.2"><polygon points="8.60,3.20 10.08,6.76 13.93,7.07 11.00,9.58 11.89,13.33 8.60,11.32 5.31,13.33 6.20,9.58 3.27,7.07 7.12,6.76" fill="#6aa6a6"/></svg>
<div class="a" style="left:114.30px;top:557.30px;width:8.60px;height:8.60px;background:#5b6896;"></div>
<svg class="a" style="left:129.90px;top:553.00px;" width="17.2" height="17.2" viewBox="0 0 17.2 17.2"><path d="M8.6 3.3L13.6 12.2H3.6z" fill="#ff1744"/></svg>
<div class="a" style="left:486.60px;top:551.00px;width:364.10px;height:27.50px;background:#4a8196;border-radius:5px;box-shadow:0 2px 2.5px rgba(0,0,0,0.22);"></div>
<div class="t" style="left:492.20px;top:559.41px;font-size:10.95px;line-height:10.95px;color:#fff;-webkit-text-stroke:0.25px #fff;">02. Small Cell Deployment</div>
<div class="a" style="left:627.60px;top:553.00px;width:17.20px;height:17.20px;background:#fff;border-radius:50%;"></div>
<div class="a" style="left:647.50px;top:553.00px;width:17.20px;height:17.20px;background:#fff;border-radius:50%;"></div>
<div class="a" style="left:667.40px;top:553.00px;width:17.20px;height:17.20px;background:#fff;border-radius:50%;"></div>
<svg class="a" style="left:627.60px;top:553.00px;" width="17.2" height="17.2" viewBox="0 0 17.2 17.2"><polygon points="8.60,3.20 10.08,6.76 13.93,7.07 11.00,9.58 11.89,13.33 8.60,11.32 5.31,13.33 6.20,9.58 3.27,7.07 7.12,6.76" fill="#c0504d"/></svg>
<div class="a" style="left:651.80px;top:557.30px;width:8.60px;height:8.60px;background:#5b6896;"></div>
<svg class="a" style="left:667.40px;top:553.00px;" width="17.2" height="17.2" viewBox="0 0 17.2 17.2"><path d="M8.6 3.3L13.6 12.2H3.6z" fill="#ff1744"/></svg>
<div class="a" style="left:0.00px;top:564.50px;width:963.60px;height:9.50px;background:#fff;"></div>
<div class="a" style="left:0.00px;top:564.50px;width:230.20px;height:6.00px;background:#b0b0b0;border-radius:3px;"></div>
<div class="a" style="left:0.00px;top:570.50px;width:963.60px;height:3.00px;background:linear-gradient(#a6a6a6,#8e8e8e);"></div>
</div>
<div class="a" style="left:1518.40px;top:229.50px;width:1.00px;height:505.50px;background:#f0f0f0;"></div>
<div class="a" style="left:1518.40px;top:162.00px;width:1.50px;height:67.00px;background:linear-gradient(to right,#d8d8d8,#eeeeee);"></div>
</body></html>
